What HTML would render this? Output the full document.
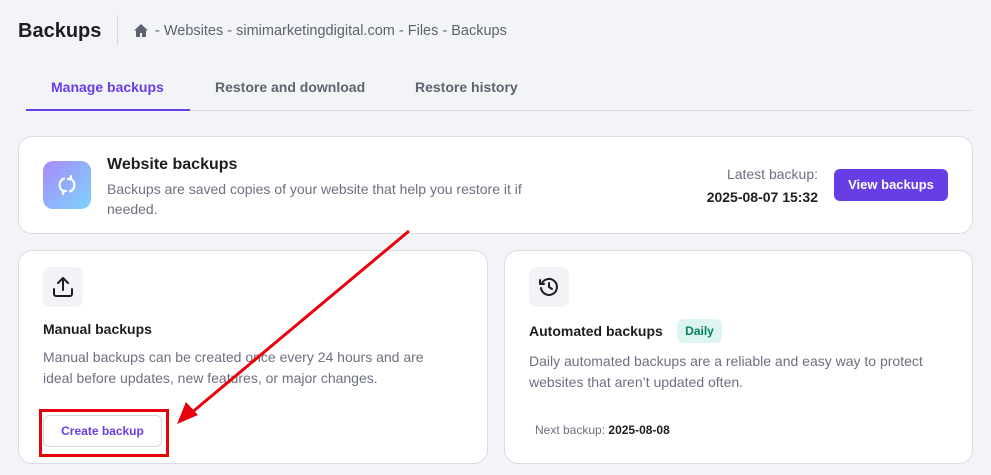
<!DOCTYPE html><html><head><style>
*{margin:0;padding:0;box-sizing:border-box}
body{width:991px;height:475px;background:#f3f4f7;font-family:"Liberation Sans",sans-serif;position:relative;overflow:hidden;color:#1d1e20}
.a{position:absolute}
.card{position:absolute;background:#fff;border:1px solid #dadce3;border-radius:14px}
.g{color:#6d7081}
.ic{position:absolute;width:40px;height:40px;border-radius:8px;background:#f2f3f6}
</style></head><body>
<div class="a" style="left:18px;top:20px;font-size:20px;font-weight:bold">Backups</div>
<div class="a" style="left:117px;top:15px;width:1px;height:31px;background:#d5d7de"></div>
<svg class="a" style="left:133px;top:23px" width="16" height="15" viewBox="0 0 16 15"><path d="M8 1L1 7.5h2V14h4v-4h2v4h4V7.5h2z" fill="#5f6270"/></svg>
<div class="a g" style="left:155px;top:23px;font-size:14.5px;color:#5f6270">- Websites - simimarketingdigital.com - Files - Backups</div>
<div class="a" style="left:26px;top:110px;width:946px;height:1px;background:#d8dae0"></div>
<div class="a" style="left:26px;top:109px;width:164px;height:2px;background:#673de6"></div>
<div class="a" style="left:51px;top:79px;font-size:14px;font-weight:bold;color:#673de6">Manage backups</div>
<div class="a" style="left:215px;top:79px;font-size:14px;font-weight:bold;color:#5f6270">Restore and download</div>
<div class="a" style="left:415px;top:79px;font-size:14px;font-weight:bold;color:#5f6270">Restore history</div>

<div class="card" style="left:18px;top:136px;width:955px;height:98px"></div>
<div class="a" style="left:43px;top:161px;width:48px;height:48px;border-radius:10px;background:linear-gradient(135deg,#a78bfa,#7dd3fc)"></div>
<svg class="a" style="left:55px;top:173px" width="24" height="24" viewBox="0 0 24 24" fill="none" stroke="#fff" stroke-width="2.2" stroke-linecap="round" stroke-linejoin="round"><path d="M9 5.5A7 7 0 0 0 9 18.5"/><path d="M15 18.5A7 7 0 0 0 15 5.5"/><path d="M16 3v3h-3M8 21v-3h3"/></svg>
<div class="a" style="left:107px;top:156px;font-size:16px;font-weight:bold">Website backups</div>
<div class="a g" style="left:107px;top:179px;font-size:14px;line-height:20px;width:460px">Backups are saved copies of your website that help you restore it if needed.</div>
<div class="a g" style="left:700px;top:166px;width:118px;text-align:right;font-size:14px">Latest backup:</div>
<div class="a" style="left:680px;top:189px;width:138px;text-align:right;font-size:14px;font-weight:bold">2025-08-07 15:32</div>
<div class="a" style="left:834px;top:169px;width:114px;height:32px;border-radius:6px;background:#673de6;color:#fff;font-size:13px;font-weight:bold;text-align:center;line-height:32px">View backups</div>

<div class="card" style="left:18px;top:250px;width:470px;height:214px"></div>
<div class="ic" style="left:43px;top:267px"></div>
<svg class="a" style="left:51px;top:275px" width="24" height="24" viewBox="0 0 24 24" fill="none" stroke="#1d1e20" stroke-width="2" stroke-linecap="round" stroke-linejoin="round"><path d="M12 15V3M7 8l5-5 5 5M3 14v5a2 2 0 0 0 2 2h14a2 2 0 0 0 2-2v-5"/></svg>
<div class="a" style="left:43px;top:321px;font-size:14px;font-weight:bold">Manual backups</div>
<div class="a g" style="left:43px;top:347px;font-size:14px;line-height:21px;width:405px">Manual backups can be created once every 24 hours and are ideal before updates, new features, or major changes.</div>
<div class="a" style="left:43px;top:415px;width:119px;height:32px;border:1px solid #d5d7de;border-radius:6px;color:#673de6;font-size:12px;font-weight:bold;text-align:center;line-height:30px">Create backup</div>
<div class="a" style="left:39px;top:409px;width:130px;height:48px;border:3px solid #e8000b"></div>

<div class="card" style="left:504px;top:250px;width:469px;height:214px"></div>
<div class="ic" style="left:529px;top:267px"></div>
<svg class="a" style="left:537px;top:275px" width="24" height="24" viewBox="0 0 24 24" fill="none" stroke="#1d1e20" stroke-width="2" stroke-linecap="round" stroke-linejoin="round"><path d="M4.5 9A8 8 0 1 1 4 13"/><path d="M3 5v4h4M12 8v4l3 2"/></svg>
<div class="a" style="left:529px;top:323px;font-size:14px;font-weight:bold">Automated backups</div>
<div class="a" style="left:677px;top:319px;width:45px;height:24px;border-radius:6px;background:#def4f0;color:#008361;font-size:12px;font-weight:bold;text-align:center;line-height:24px">Daily</div>
<div class="a g" style="left:529px;top:351px;font-size:14px;line-height:21px;width:430px">Daily automated backups are a reliable and easy way to protect websites that aren’t updated often.</div>
<div class="a" style="left:535px;top:423px;font-size:12px"><span class="g">Next backup:</span> <b>2025-08-08</b></div>

<svg class="a" style="left:0;top:0" width="991" height="475"><line x1="409" y1="231" x2="190" y2="414" stroke="#e8000b" stroke-width="3"/><path d="M177 424l9-22 12 13z" fill="#e8000b"/></svg>
</body></html>
